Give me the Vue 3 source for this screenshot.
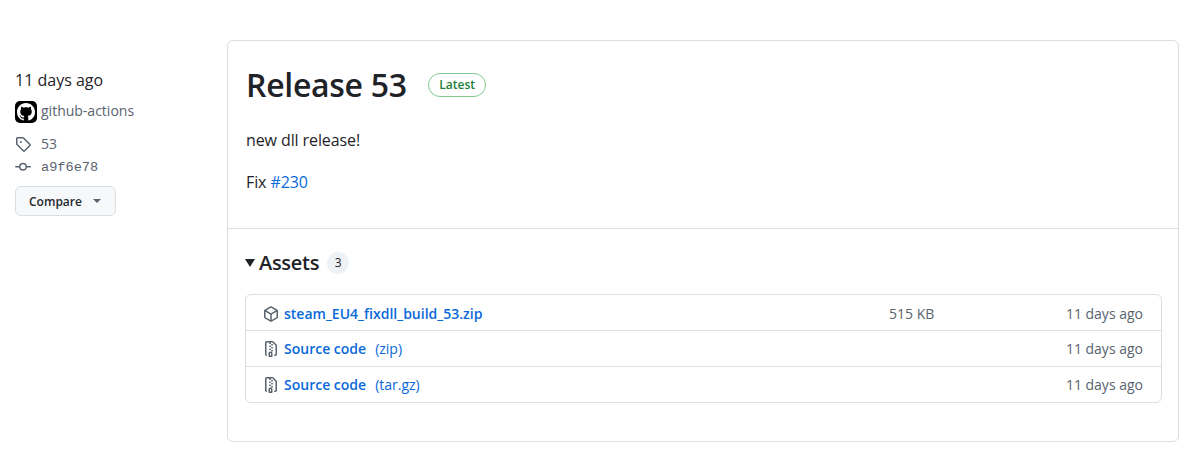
<template>
  <div class="page">
    <aside class="side">
      <div class="when">11 days ago</div>
      <div class="author">
        <span class="avatar">
          <svg viewBox="0 0 16 16" width="18" height="18"><path fill="#fff" :d="icons.github" /></svg>
        </span>
        <span class="lift">github-actions</span>
      </div>
      <div class="meta tag">
        <svg viewBox="0 0 16 16" width="16" height="16"><path :d="icons.tag" /></svg>
        <span class="lift">53</span>
      </div>
      <div class="meta commit">
        <svg viewBox="0 0 16 16" width="16" height="16"><path :d="icons.commit" /></svg>
        <code>a9f6e78</code>
      </div>
      <button class="compare">Compare <i class="caret"></i></button>
    </aside>

    <main class="card">
      <section class="top">
        <div class="title">
          <h1>Release 53</h1>
          <span class="label">Latest</span>
        </div>
        <p>new dll release!</p>
        <p>Fix <a class="link">#230</a></p>
      </section>

      <section class="assets">
        <div class="head">
          <i class="tri"></i>
          <h2>Assets</h2>
          <span class="count">{{ rows.length }}</span>
        </div>
        <ul class="list">
          <li v-for="row in rows" :key="row.name + row.ext">
            <div class="name">
              <svg viewBox="0 0 16 16" width="16" height="16"><path fill-rule="evenodd" :d="icons[row.icon]" /></svg>
              <a class="file">{{ row.name }}</a>
              <span v-if="row.ext" class="ext">{{ row.ext }}</span>
            </div>
            <span class="size">{{ row.size }}</span>
            <span class="date">11 days ago</span>
          </li>
        </ul>
      </section>
    </main>
  </div>
</template>

<script setup>
const icons = {
  github:
    "M8 0c4.42 0 8 3.58 8 8a8.013 8.013 0 0 1-5.45 7.59c-.4.08-.55-.17-.55-.38 0-.27.01-1.13.01-2.2 0-.75-.25-1.23-.54-1.48 1.78-.2 3.65-.88 3.65-3.95 0-.88-.31-1.59-.82-2.15.08-.2.36-1.02-.08-2.12 0 0-.67-.22-2.2.82-.64-.18-1.32-.27-2-.27-.68 0-1.36.09-2 .27-1.53-1.03-2.2-.82-2.2-.82-.44 1.1-.16 1.92-.08 2.12-.51.56-.82 1.28-.82 2.15 0 3.06 1.86 3.75 3.64 3.95-.23.2-.44.55-.51 1.07-.46.21-1.61.55-2.33-.66-.15-.24-.6-.83-1.23-.82-.67.01-.27.38.01.53.34.19.73.9.82 1.13.16.45.68 1.31 2.69.94 0 .67.01 1.3.01 1.49 0 .21-.15.45-.55.38A7.995 7.995 0 0 1 0 8c0-4.42 3.58-8 8-8Z",
  tag: "M1 7.775V2.75C1 1.784 1.784 1 2.75 1h5.025c.464 0 .91.184 1.238.513l6.25 6.25a1.75 1.75 0 0 1 0 2.474l-5.026 5.026a1.75 1.75 0 0 1-2.474 0l-6.25-6.25A1.752 1.752 0 0 1 1 7.775Zm1.5 0c0 .066.026.13.073.177l6.25 6.25a.25.25 0 0 0 .354 0l5.025-5.025a.25.25 0 0 0 0-.354l-6.25-6.25a.25.25 0 0 0-.177-.073H2.75a.25.25 0 0 0-.25.25ZM6 5a1 1 0 1 1 0 2 1 1 0 0 1 0-2Z",
  commit:
    "M11.93 8.5a4.002 4.002 0 0 1-7.86 0H.75a.75.75 0 0 1 0-1.5h3.32a4.002 4.002 0 0 1 7.86 0h3.32a.75.75 0 0 1 0 1.5Zm-1.43-.75a2.5 2.5 0 1 0-5 0 2.5 2.5 0 0 0 5 0Z",
  pack: "M8.878.392a1.75 1.75 0 0 0-1.756 0l-5.25 3.045A1.75 1.75 0 0 0 1 4.951v6.098c0 .624.332 1.2.872 1.514l5.25 3.045a1.75 1.75 0 0 0 1.756 0l5.25-3.045c.54-.313.872-.89.872-1.514V4.951c0-.624-.332-1.2-.872-1.514ZM7.875 1.69a.25.25 0 0 1 .25 0l4.63 2.685L8 7.133 3.245 4.375l4.63-2.685ZM2.5 5.677v5.372c0 .09.047.171.125.216l4.625 2.683V8.432Zm6.25 8.271 4.625-2.683a.25.25 0 0 0 .125-.216V5.677L8.75 8.432Z",
  zip: "M3.5 1.75v11.5c0 .09.048.173.126.217a.75.75 0 0 1-.752 1.298A1.748 1.748 0 0 1 2 13.25V1.75C2 .784 2.784 0 3.75 0h5.586c.464 0 .909.185 1.237.513l2.914 2.914c.329.328.513.773.513 1.237v8.586A1.75 1.75 0 0 1 12.25 15h-.5a.75.75 0 0 1 0-1.5h.5a.25.25 0 0 0 .25-.25V4.664a.25.25 0 0 0-.073-.177L9.513 1.573a.25.25 0 0 0-.177-.073H7.25a.75.75 0 0 1 0 1.5h-.5a.75.75 0 0 1 0-1.5h-3a.25.25 0 0 0-.25.25Zm3.75 8.75h.5c.966 0 1.75.784 1.75 1.75v3a.75.75 0 0 1-.75.75h-2.5a.75.75 0 0 1-.75-.75v-3c0-.966.784-1.75 1.75-1.75ZM6 5.25a.75.75 0 0 1 .75-.75h.5a.75.75 0 0 1 0 1.5h-.5A.75.75 0 0 1 6 5.25Zm.75 2.25h.5a.75.75 0 0 1 0 1.5h-.5a.75.75 0 0 1 0-1.5ZM8 6.75A.75.75 0 0 1 8.75 6h.5a.75.75 0 0 1 0 1.5h-.5A.75.75 0 0 1 8 6.75ZM8.75 3h.5a.75.75 0 0 1 0 1.5h-.5a.75.75 0 0 1 0-1.5ZM8 9.75A.75.75 0 0 1 8.75 9h.5a.75.75 0 0 1 0 1.5h-.5A.75.75 0 0 1 8 9.75Zm-1 2.5v2.25h1v-2.25a.25.25 0 0 0-.25-.25h-.5a.25.25 0 0 0-.25.25Z",
};

const rows = [
  { icon: "pack", name: "steam_EU4_fixdll_build_53.zip", ext: "", size: "515 KB" },
  { icon: "zip", name: "Source code", ext: "(zip)", size: "" },
  { icon: "zip", name: "Source code", ext: "(tar.gz)", size: "" },
];
</script>

<style>
body {
  background: #fff;
}
</style>

<style scoped>
.page {
  display: flex;
  align-items: flex-start;
  width: 1192px;
  height: 454px;
  overflow: hidden;
  padding: 40px 13px 0 15px;
  box-sizing: border-box;
  font-family: "Open Sans", "Noto Sans", sans-serif;
  color: #1f2328;
}
.side {
  width: 212px;
  flex: none;
  padding-top: 29px;
}
.when {
  font-size: 16px;
  line-height: 22px;
}
.author {
  display: flex;
  align-items: center;
  gap: 4px;
  margin-top: 10px;
  font-size: 14px;
  line-height: 20px;
  color: #59636e;
}
.lift {
  margin-bottom: 2px;
}
.avatar {
  width: 22px;
  height: 22px;
  border-radius: 5px;
  background: #000;
  display: flex;
  align-items: center;
  justify-content: center;
}
.meta {
  display: flex;
  align-items: center;
  gap: 10px;
  font-size: 14px;
  color: #59636e;
}
.meta svg {
  fill: #59636e;
}
.tag {
  margin-top: 10px;
  height: 22px;
}
.commit {
  margin-top: 2px;
  height: 20px;
}
code {
  font-family: "Liberation Mono", monospace;
  font-size: 13.6px;
}
.compare {
  display: flex;
  align-items: center;
  gap: 11px;
  margin-top: 9px;
  width: 101px;
  height: 30px;
  padding: 0 13px;
  border: 1px solid #d9dee3;
  border-radius: 6px;
  background: #f6f8fa;
  color: #25292e;
  font: 600 12px "Open Sans", sans-serif;
  box-sizing: border-box;
}
.caret {
  border-top: 4px solid #59636e;
  border-left: 4px solid transparent;
  border-right: 4px solid transparent;
}
.card {
  flex: 1;
  height: 402px;
  border: 1px solid #d9dee3;
  border-radius: 6px;
  box-sizing: border-box;
}
.top {
  height: 188px;
  padding: 23px 18px 0;
  border-bottom: 1px solid #d9dee3;
  box-sizing: border-box;
}
.title {
  display: flex;
  align-items: center;
  gap: 21px;
  height: 42px;
  margin-bottom: 22px;
}
h1 {
  margin: 0;
  font-size: 32px;
  line-height: 42px;
  font-weight: 600;
  letter-spacing: -0.3px;
}
.label {
  border: 1px solid #7fc98f;
  border-radius: 12px;
  color: #1a7f37;
  font-size: 12px;
  font-weight: 600;
  line-height: 22px;
  padding: 0 10.5px;
}
p {
  margin: 0 0 18px;
  font-size: 16px;
  line-height: 24px;
  letter-spacing: -0.1px;
}
.link {
  color: #0969da;
}
.assets {
  padding: 21px 16px 0 17px;
}
.head {
  display: flex;
  align-items: center;
  height: 26px;
}
.tri {
  border-top: 8px solid #1f2328;
  border-left: 5px solid transparent;
  border-right: 5px solid transparent;
  margin-right: 4px;
}
h2 {
  margin: 0;
  font-size: 20px;
  font-weight: 600;
  line-height: 26px;
  letter-spacing: -0.3px;
}
.count {
  width: 22px;
  height: 22px;
  margin-left: 8px;
  border-radius: 50%;
  background: #eff2f5;
  font-size: 12px;
  font-weight: 500;
  line-height: 22px;
  text-align: center;
}
.list {
  list-style: none;
  margin: 18px 0 0;
  padding: 0;
  border: 1px solid #d9dee3;
  border-radius: 6px;
}
li {
  display: flex;
  align-items: center;
  height: 35px;
  padding: 0 18px 0 17px;
  border-top: 1px solid #d9dee3;
  font-size: 14px;
  color: #59636e;
}
li:first-child {
  height: 33px;
  padding-top: 2px;
  border-top: 0;
}
.name {
  flex: 1;
  display: flex;
  align-items: center;
}
.name svg {
  fill: #59636e;
  margin-right: 5px;
}
.file {
  color: #0969da;
  font-weight: 600;
}
.ext {
  margin-left: 9px;
  color: #0969da;
}
.size {
  width: 174px;
}
.date {
  width: 80px;
  text-align: right;
}
</style>
